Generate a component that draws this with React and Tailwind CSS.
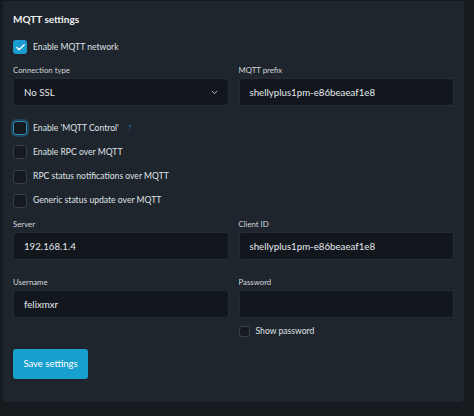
import { ChevronDown, Check } from 'lucide-react'

const font = { fontFamily: 'Lato, "Noto Sans", sans-serif' }

function Box({ checked, focused, small }) {
  const size = small ? 'w-[11px] h-[11px]' : 'w-[14px] h-[14px]'
  if (checked) {
    return (
      <span className={`${size} shrink-0 rounded-[3px] bg-[#1a9bd0] flex items-center justify-center`}>
        <Check size={11} strokeWidth={3} className="text-white" />
      </span>
    )
  }
  return (
    <span
      className={`${size} shrink-0 rounded-[3px] bg-[#161b21] border ${
        focused ? 'border-[#2a90bd] shadow-[0_0_0_2px_rgba(26,155,208,0.25)]' : 'border-[#3a4049]'
      }`}
    />
  )
}

function CheckRow({ label, checked, focused, help }) {
  return (
    <div className="flex items-center gap-[6px] h-[14px]">
      <Box checked={checked} focused={focused} />
      <span className="text-[8.6px] text-[#dfe3e8]">{label}</span>
      {help && <span className="text-[8px] text-[#2a7fa8] ml-[3px]">?</span>}
    </div>
  )
}

function Field({ label, value, select }) {
  return (
    <div className="flex flex-col">
      <label className="text-[7.8px] leading-[12px] text-[#d4d8de]">{label}</label>
      <div className="mt-[2px] h-[28px] rounded-[3px] bg-[#12171d] border border-[#262c34] flex items-center pl-[10px] pr-[9px]">
        <span className="flex-1 text-[9.7px] text-[#e6e9ed]">{value}</span>
        {select && <ChevronDown size={9} strokeWidth={2.5} className="text-[#c8ccd2]" />}
      </div>
    </div>
  )
}

export default function App() {
  return (
    <div className="w-[474px] h-[416px] bg-[#151a1f] pl-[3px] pr-[10px] pt-[1px]" style={font}>
      <div className="w-[461px] h-[401px] rounded-b-[4px] bg-[#1f252c] px-[10px] pt-[11px]">
        <h2 className="text-[10px] leading-[14px] font-bold text-[#eef0f3]">MQTT settings</h2>

        <div className="mt-[14px]">
          <CheckRow label="Enable MQTT network" checked />
        </div>

        <div className="grid grid-cols-2 gap-x-[10px] mt-[10px]">
          <Field label="Connection type" value="No SSL" select />
          <Field label="MQTT prefix" value="shellyplus1pm-e86beaeaf1e8" />
        </div>

        <div className="flex flex-col gap-[10.3px] mt-[15px]">
          <CheckRow label="Enable 'MQTT Control'" focused help />
          <CheckRow label="Enable RPC over MQTT" />
          <CheckRow label="RPC status notifications over MQTT" />
          <CheckRow label="Generic status update over MQTT" />
        </div>

        <div className="grid grid-cols-2 gap-x-[10px] mt-[10px]">
          <Field label="Server" value="192.168.1.4" />
          <Field label="Client ID" value="shellyplus1pm-e86beaeaf1e8" />
        </div>

        <div className="grid grid-cols-2 gap-x-[10px] mt-[16px]">
          <Field label="Username" value="felixmxr" />
          <div>
            <Field label="Password" value="" />
            <div className="flex items-center gap-[6px] mt-[8px] h-[11px]">
              <Box small />
              <span className="text-[8.6px] text-[#dfe3e8]">Show password</span>
            </div>
          </div>
        </div>

        <button className="mt-[12px] h-[30px] w-[75px] rounded-[3px] bg-[#179fd0] text-[9.5px] text-white">
          Save settings
        </button>
      </div>
    </div>
  )
}
